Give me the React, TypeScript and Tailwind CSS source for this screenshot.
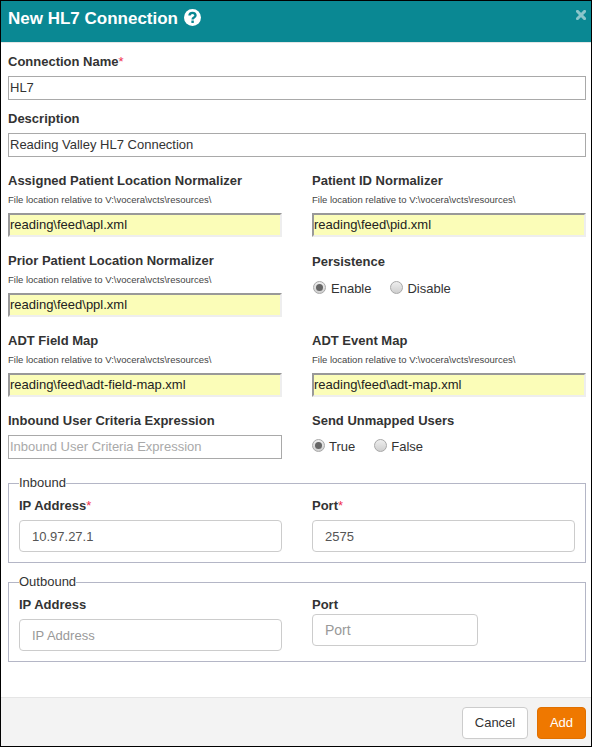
import React from "react";

const Req = () => <span className="text-[#f0304f] font-normal">*</span>;

function Label({ children, className = "" }: { children: React.ReactNode; className?: string }) {
  return <label className={`block h-5 leading-[22px] text-[13px] font-bold text-[#333333] ${className}`}>{children}</label>;
}

function Hint() {
  return <div className="h-[23px] pt-[3px] leading-[13px] text-[9.5px] text-[#444444] whitespace-nowrap">File location relative to V:\vocera\vcts\resources\</div>;
}

function PlainInput({ value, placeholder }: { value?: string; placeholder?: string }) {
  return (
    <input
      readOnly
      value={value ?? ""}
      placeholder={placeholder}
      className="block w-full h-6 border border-[#a9a9a9] bg-white px-[1px] pb-[2px] text-[13px] text-[#333333] placeholder:text-[#a9a9a9] outline-none"
    />
  );
}

function YellowInput({ value }: { value: string }) {
  return (
    <input
      readOnly
      value={value}
      className="block w-full h-6 border-2 border-t-[#999999] border-l-[#999999] border-r-[#eeeeee] border-b-[#eeeeee] bg-[#fbfdb8] px-0 pb-[1px] text-[13px] text-[#222222] outline-none"
    />
  );
}

function RoundInput({ value, placeholder, className = "h-8" }: { value?: string; placeholder?: string; className?: string }) {
  return (
    <input
      readOnly
      value={value ?? ""}
      placeholder={placeholder}
      className={`block rounded-[4px] border border-[#cccccc] bg-white px-3 text-[13px] text-[#555555] placeholder:text-[#999999] outline-none ${className}`}
    />
  );
}

function FileField({ label, value }: { label: string; value: string }) {
  return (
    <div>
      <Label>{label}</Label>
      <Hint />
      <YellowInput value={value} />
    </div>
  );
}

function Radio({ label, checked, className = "", gap = "gap-[4px]" }: { label: string; checked?: boolean; className?: string; gap?: string }) {
  return (
    <span className={`flex items-center ${gap} text-[13px] text-[#333333] ${className}`}>
      <span className="flex items-center justify-center w-[13px] h-[13px] rounded-full border border-[#a8a8a8] bg-gradient-to-b from-[#eeeeee] to-[#cfcfcf]">
        {checked && <span className="w-[7px] h-[7px] rounded-full bg-[#666666]" />}
      </span>
      <span className="pt-[2px]">{label}</span>
    </span>
  );
}

function Group({ title, children }: { title: string; children: React.ReactNode }) {
  return (
    <fieldset className="border border-[#b4b6c6] px-[10px] pb-[10px]">
      <legend className="h-4 leading-4 text-[13px] text-[#333333]">{title}</legend>
      <div className="mt-1 grid grid-cols-[263px_263px] gap-x-[30px]">{children}</div>
    </fieldset>
  );
}

export default function App() {
  return (
    <div className="w-[592px] h-[747px] flex flex-col bg-white border border-black font-['Liberation_Sans',Arial,sans-serif] overflow-hidden">
      <header className="h-[42px] shrink-0 flex items-start bg-[#0a8893] border-b border-[#e3e6e6] pl-[7px] pr-[5px]">
        <h1 className="mt-[8px] h-5 leading-5 text-[17px] font-bold text-white">New HL7 Connection</h1>
        <svg viewBox="0 0 18 18" className="w-[17px] h-[17px] ml-[6px] mt-[8px]">
          <circle cx="9" cy="9" r="9" fill="#ffffff" />
          <path d="M5.8 7 C5.8 3.2 12.2 3.2 12.2 7 C12.2 9.2 9.1 9 9.1 11" fill="none" stroke="#0a8893" strokeWidth="2.5" />
          <rect x="7.8" y="12.2" width="2.6" height="2.6" fill="#0a8893" />
        </svg>
        <svg viewBox="0 0 10 10" className="w-[10px] h-[10px] ml-auto mt-[9px]">
          <path d="M1.4 1.4 L8.6 8.6 M8.6 1.4 L1.4 8.6" stroke="#8ac5ca" strokeWidth="3" strokeLinecap="square" />
        </svg>
      </header>

      <main className="flex-1 pl-[7px] pr-[5px] pt-2">
        <Label>Connection Name<Req /></Label>
        <div className="mt-[5px]"><PlainInput value="HL7" /></div>
        <Label className="mt-2">Description</Label>
        <div className="mt-[5px]"><PlainInput value="Reading Valley HL7 Connection" /></div>

        <div className="mt-[13px] grid grid-cols-[274px_274px] gap-x-[30px] gap-y-[13px]">
          <FileField label="Assigned Patient Location Normalizer" value="reading\feed\apl.xml" />
          <FileField label="Patient ID Normalizer" value="reading\feed\pid.xml" />
          <FileField label="Prior Patient Location Normalizer" value="reading\feed\ppl.xml" />
          <div>
            <Label className="mt-[1px]">Persistence</Label>
            <div className="mt-[6px] flex items-center pl-[1px]">
              <Radio label="Enable" checked gap="gap-[5px]" />
              <Radio label="Disable" className="ml-[19px]" />
            </div>
          </div>
          <FileField label="ADT Field Map" value="reading\feed\adt-field-map.xml" />
          <FileField label="ADT Event Map" value="reading\feed\adt-map.xml" />
          <div>
            <Label>Inbound User Criteria Expression</Label>
            <div className="mt-[5px]"><PlainInput placeholder="Inbound User Criteria Expression" /></div>
          </div>
          <div>
            <Label>Send Unmapped Users</Label>
            <div className="mt-[5px] flex items-center">
              <Radio label="True" checked />
              <Radio label="False" className="ml-[19px]" />
            </div>
          </div>
        </div>

        <div className="mt-4">
          <Group title="Inbound">
            <div>
              <Label>IP Address<Req /></Label>
              <div className="mt-[5px]"><RoundInput value="10.97.27.1" className="w-full h-8" /></div>
            </div>
            <div>
              <Label>Port<Req /></Label>
              <div className="mt-[5px]"><RoundInput value="2575" className="w-full h-8" /></div>
            </div>
          </Group>
        </div>
        <div className="mt-[11px]">
          <Group title="Outbound">
            <div>
              <Label>IP Address</Label>
              <div className="mt-[5px]"><RoundInput placeholder="IP Address" className="w-full h-8" /></div>
            </div>
            <div>
              <Label>Port</Label>
              <RoundInput placeholder="Port" className="w-[166px] h-8 text-[14px]" />
            </div>
          </Group>
        </div>
      </main>

      <footer className="h-[49px] shrink-0 flex items-start justify-end gap-[9px] bg-[#f3f3f3] border-t border-[#e5e5e5] pt-[9px] pr-[5px]">
        <button className="w-[66px] h-8 rounded-[4px] border border-[#cccccc] bg-white text-[13px] text-[#333333]">Cancel</button>
        <button className="w-[49px] h-8 rounded-[4px] border border-[#e07000] bg-[#ef7800] text-[13px] text-white">Add</button>
      </footer>
    </div>
  );
}
